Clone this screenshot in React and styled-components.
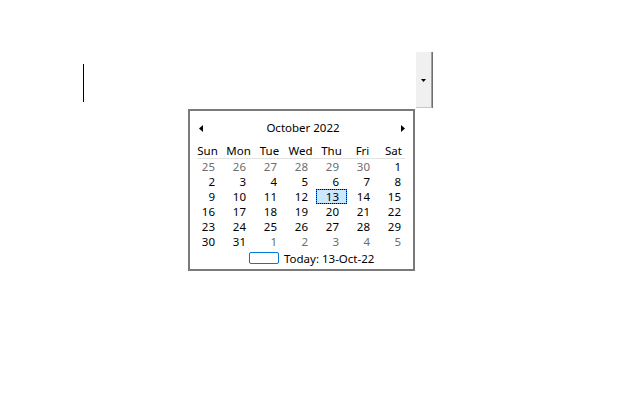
import React from "react";
import styled, { createGlobalStyle } from "styled-components";

const GlobalStyle = createGlobalStyle`
  html, body {
    margin: 0;
    padding: 0;
    background: #fff;
  }
  body {
    font-family: "Noto Sans", "Open Sans", sans-serif;
    font-size: 11.5px;
    color: #000;
  }
`;

const DAY_NAMES = ["Sun", "Mon", "Tue", "Wed", "Thu", "Fri", "Sat"];

// October 2022 grid, with trailing September and leading November days
const buildWeeks = () => {
  const cells = [];
  for (let d = 25; d <= 30; d++) cells.push({ day: d, other: true });
  for (let d = 1; d <= 31; d++) cells.push({ day: d, other: false });
  for (let d = 1; cells.length < 42; d++) cells.push({ day: d, other: true });
  const weeks = [];
  for (let i = 0; i < 42; i += 7) weeks.push(cells.slice(i, i + 7));
  return weeks;
};

const TODAY = 13;

const DatePicker = () => {
  const weeks = buildWeeks();

  return (
    <Page>
      <GlobalStyle />
      <Combo>
        <Field>
          <Caret />
        </Field>
        <DropButton>
          <svg width="5" height="3" viewBox="0 0 5 3">
            <path d="M0 0h5L2.5 3z" fill="#000" />
          </svg>
        </DropButton>

        <Popup>
          <MonthHeader>
            <NavArrow>
              <svg width="4" height="7" viewBox="0 0 4 7">
                <path d="M4 0v7L0 3.5z" fill="#000" />
              </svg>
            </NavArrow>
            <MonthTitle>October 2022</MonthTitle>
            <NavArrow>
              <svg width="4" height="7" viewBox="0 0 4 7">
                <path d="M0 0v7l4-3.5z" fill="#000" />
              </svg>
            </NavArrow>
          </MonthHeader>

          <NamesRow>
            {DAY_NAMES.map((n) => (
              <DayName key={n}>{n}</DayName>
            ))}
          </NamesRow>

          <Grid>
            {weeks.map((week, wi) =>
              week.map((c, ci) => (
                <DayCell
                  key={`${wi}-${ci}`}
                  $other={c.other}
                  $today={!c.other && c.day === TODAY}
                >
                  {c.day}
                </DayCell>
              ))
            )}
          </Grid>

          <TodayRow>
            <TodayMark />
            <span>Today: 13-Oct-22</span>
          </TodayRow>
        </Popup>
      </Combo>
    </Page>
  );
};

const Page = styled.div`
  min-height: 360px;
  padding: 52px 0 0 80px;
`;

const Combo = styled.div`
  position: relative;
  display: flex;
  width: 352px;
  height: 56px;
`;

const Field = styled.div`
  flex: 1;
  padding: 12px 0 0 3px;
`;

const Caret = styled.div`
  width: 1px;
  height: 38px;
  background: #000;
`;

const DropButton = styled.div`
  width: 15px;
  display: flex;
  align-items: center;
  justify-content: center;
  background: #f0f0f0;
  border-right: 1px solid #a0a0a0;
  box-shadow: 1px 0 0 #6e6e6e;
  border-bottom: 1px solid #c8c8c8;
  padding-top: 2px;
`;

const Popup = styled.div`
  position: absolute;
  z-index: 2;
  left: 108px;
  top: 57px;
  width: 217px;
  background: #fff;
  border: 2px solid #7a7a7a;
  padding: 9px 4px 3px 2px;
`;

const MonthHeader = styled.div`
  display: flex;
  align-items: center;
  justify-content: space-between;
  height: 16px;
  padding: 0 4px 0 7px;
  margin-bottom: 7px;
`;

const NavArrow = styled.span`
  display: flex;
  align-items: center;
`;

const MonthTitle = styled.span`
  line-height: 16px;
  padding-left: 2px;
`;

const NamesRow = styled.div`
  position: relative;
  display: grid;
  grid-template-columns: repeat(7, 31px);
  height: 15px;
  margin-bottom: 1px;
  &::after {
    content: "";
    position: absolute;
    left: 5px;
    right: 4px;
    bottom: -1px;
    height: 1px;
    background: #e3e3e3;
  }
`;

const DayName = styled.div`
  text-align: center;
  line-height: 15px;
`;

const Grid = styled.div`
  display: grid;
  grid-template-columns: repeat(7, 31px);
  grid-auto-rows: 15px;
`;

const DayCell = styled.div`
  text-align: right;
  line-height: ${(p) => (p.$today ? "13px" : "15px")};
  padding-right: ${(p) => (p.$today ? "7px" : "8px")};
  color: ${(p) => (p.$other ? "#6d6d6d" : "#000")};
  ${(p) =>
    p.$today &&
    `
    background: #cce8ff;
    border: 1px solid #3399ff;
    outline: 1px dotted #000;
    outline-offset: -1px;
  `}
`;

const TodayRow = styled.div`
  display: flex;
  align-items: center;
  gap: 5px;
  height: 16px;
  padding-left: 57px;
  margin-top: 1px;
`;

const TodayMark = styled.span`
  width: 28px;
  height: 10px;
  border: 1px solid #0078d7;
  border-radius: 2px;
`;

export default DatePicker;
